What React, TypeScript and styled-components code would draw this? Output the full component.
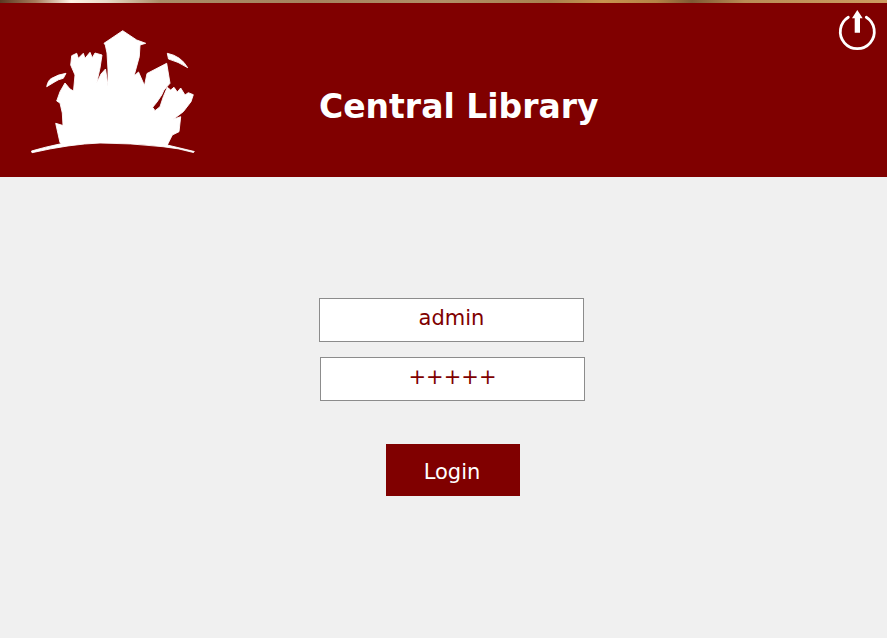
import React from 'react';
import styled, { createGlobalStyle } from 'styled-components';

const GlobalStyle = createGlobalStyle`
  html, body {
    margin: 0;
    padding: 0;
    height: 100%;
    background: #f0f0f0;
    font-family: "DejaVu Sans", "Liberation Sans", sans-serif;
  }
  #root {
    height: 100%;
  }
`;

const Page = styled.div`
  display: flex;
  flex-direction: column;
  height: 100%;
  overflow: hidden;
`;

const GoldStrip = styled.div`
  height: 3px;
  flex-shrink: 0;
  background: linear-gradient(
    90deg,
    #5a3a22 0%,
    #a67c5c 4%,
    #fff4e6 8%,
    #e8dcc8 12%,
    #a98c66 18%,
    #a5835e 35%,
    #b08f66 50%,
    #a8814e 62%,
    #c8934e 68%,
    #b48346 74%,
    #7e5a34 78%,
    #b98c55 84%,
    #cd9c60 100%
  );
`;

const Header = styled.header`
  display: flex;
  height: 174px;
  flex-shrink: 0;
  padding: 0 10px 0 30px;
  box-sizing: border-box;
  background: #800000;
  color: #fff;
`;

const Logo = styled.svg`
  width: 167px;
  height: 124px;
  margin-top: 27px;
  flex-shrink: 0;
`;

const Title = styled.h1`
  margin: 84px 0 0 122px;
  font-size: 33px;
  line-height: 40px;
  font-weight: 700;
  white-space: nowrap;
`;

const PowerButton = styled.button`
  display: flex;
  align-self: flex-start;
  margin: 5px 0 0 auto;
  padding: 0;
  border: none;
  background: none;
  cursor: pointer;
`;

const Main = styled.main`
  display: flex;
  flex-direction: column;
  align-items: flex-start;
  padding: 121px 0 0 319px;
`;

const Field = styled.input<{ $nudge?: number }>`
  width: 265px;
  height: 44px;
  margin-left: ${props => props.$nudge || 0}px;
  margin-bottom: 15px;
  padding: 0 2px 5px;
  box-sizing: border-box;
  border: 1px solid #8c8c8c;
  background: #fff;
  color: #800000;
  font-family: inherit;
  font-size: 21px;
  text-align: center;
  outline: none;
`;

const LoginButton = styled.button`
  width: 134px;
  height: 52px;
  margin: 28px 0 0 67px;
  padding: 4px 2px 0 0;
  border: none;
  background: #800000;
  color: #fff;
  font-family: inherit;
  font-size: 21px;
  cursor: pointer;
`;

// traced in page coordinates, hence the viewBox origin
const CastleLogo = () => (
  <Logo viewBox="30 30 167 124" fill="#fff" stroke="#fff" strokeWidth="0.9" strokeLinejoin="round">
    <path d="M122.7 30.7 L136.7 40 L145.7 43.3 L140 45 L139.3 56.7 L134 76 L138.5 72 L144.5 85.5 L147 73.5 L166.7 63.3 L170 83.3 L164 90 L161.7 95 L157 102 L152.7 107.3 L155 110.7 L160 106.7 L163.3 96.7 L167.3 87.3 L170.7 90 L174 87.3 L177.3 92 L180.7 88 L185 95 L188.3 92.7 L193.3 94.7 L191 101.7 L183.3 111.7 L173.3 119.3 L180.7 116.7 L179 131.7 L172.3 135 L167.3 145 L194.3 151.5 L193.5 152.5 Q178 148 163 146.7 Q130 143 100 143 Q70 144 32 152.7 L31.5 151 Q45 147 62 143.5 L60 142.7 L55.7 123.3 L63 125.5 L62.3 113 L60 103 L56.7 101 L60 91.7 L65 83 L70 89 L73.5 91 L75 75 L70.7 65 L71.7 55.7 L76.7 53.3 L78.3 58.3 L83.3 53.3 L85 58.3 L90 52.3 L92.3 57.7 L95 53 L102 55 L100 68 L96.7 83 L101 74 L105.5 69 L108 86 L108 70 L107 53 L105.3 45 L104 43.3 Z" />
    <path d="M46.7 86.7 Q48 80 51.7 78.3 Q58 74.5 66 73.3 L63.3 78.3 Q58 79.5 55 81.7 Z" />
    <path d="M167.3 53.3 Q181 56 187.7 67.7 Q178 61.5 168.5 59 Z" />
  </Logo>
);

const PowerIcon = () => (
  <svg width="40" height="46" viewBox="0 0 40 46" fill="none">
    <path d="M11.3 9.3 A17 17 0 1 0 29.3 9.3" stroke="#fff" strokeWidth="2.8" strokeLinecap="round" />
    <path d="M20.3 2 L25.7 10.3 L23 10.3 L23 24.7 L17.7 24.7 L17.7 10.3 L15 10.3 Z" fill="#fff" />
  </svg>
);

export default function App() {
  return (
    <Page>
      <GlobalStyle />
      <GoldStrip />
      <Header>
        <CastleLogo />
        <Title>Central Library</Title>
        <PowerButton type="button" aria-label="Exit">
          <PowerIcon />
        </PowerButton>
      </Header>
      <Main>
        <Field type="text" value="admin" readOnly />
        <Field type="text" value="+++++" readOnly $nudge={1} />
        <LoginButton type="button">Login</LoginButton>
      </Main>
    </Page>
  );
}
